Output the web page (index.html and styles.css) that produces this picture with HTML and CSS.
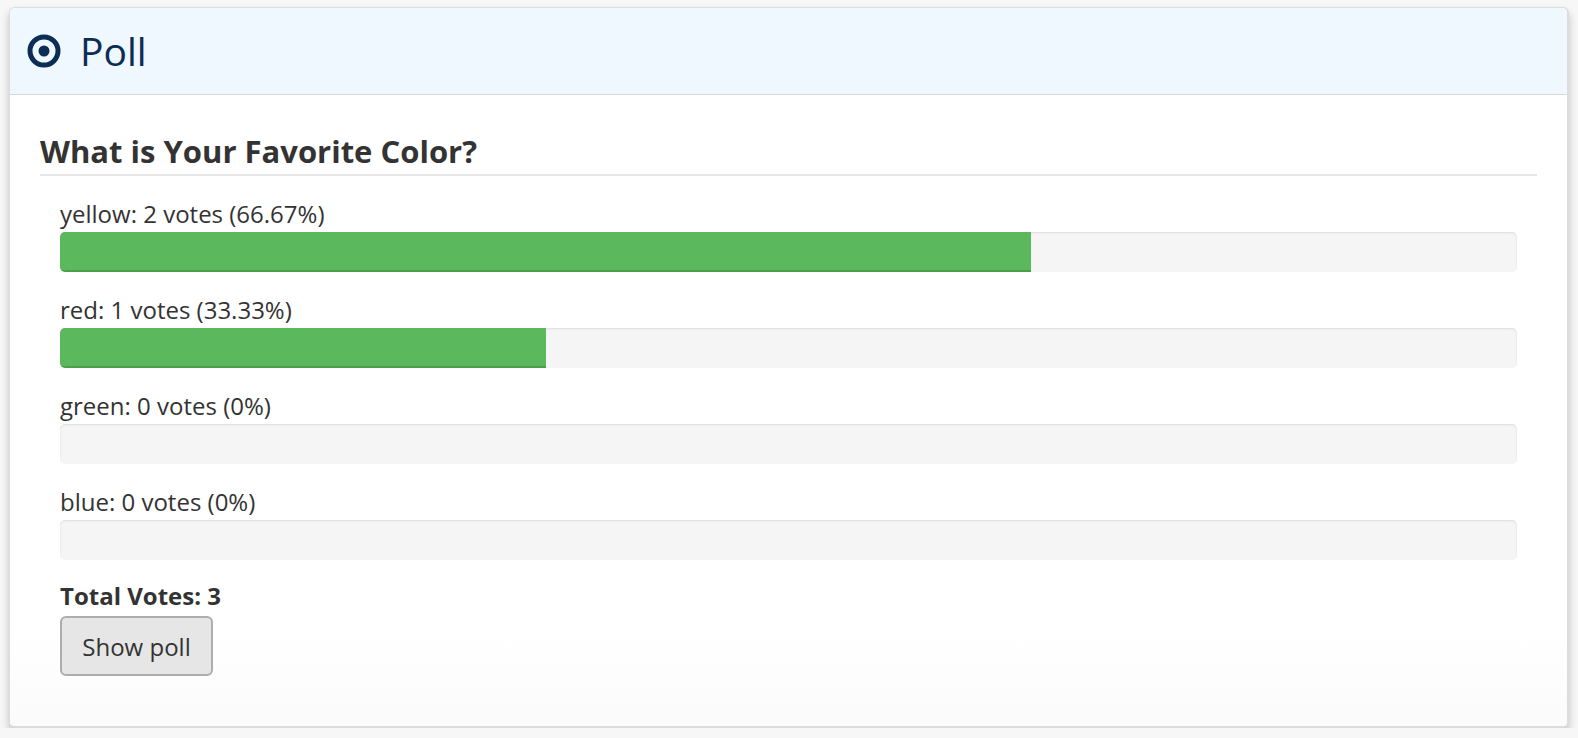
FILE: index.html
```html
<!DOCTYPE html>
<html>
<head>
<meta charset="utf-8">
<link rel="stylesheet" href="styles.css">
</head>
<body>
<div class="panel">
  <div class="panel-heading">
    <svg class="poll-icon" width="34" height="34" viewBox="0 0 34 34">
      <circle cx="17" cy="17" r="14" fill="none" stroke="#0c2d54" stroke-width="5"/>
      <circle cx="17" cy="17" r="5.5" fill="#0c2d54"/>
    </svg>
    <span class="panel-title">Poll</span>
  </div>
  <div class="panel-body">
    <h2 class="question">What is Your Favorite Color?</h2>
    <div class="results">
      <div class="result">
        <div class="result-label">yellow: 2 votes (66.67%)</div>
        <div class="progress"><div class="progress-bar" style="width: 66.67%"></div></div>
      </div>
      <div class="result">
        <div class="result-label">red: 1 votes (33.33%)</div>
        <div class="progress"><div class="progress-bar" style="width: 33.33%"></div></div>
      </div>
      <div class="result">
        <div class="result-label">green: 0 votes (0%)</div>
        <div class="progress"><div class="progress-bar" style="width: 0%"></div></div>
      </div>
      <div class="result">
        <div class="result-label">blue: 0 votes (0%)</div>
        <div class="progress"><div class="progress-bar" style="width: 0%"></div></div>
      </div>
      <div class="total">Total Votes: 3</div>
      <button class="btn">Show poll</button>
    </div>
  </div>
</div>
</body>
</html>
```
FILE: styles.css
```css
html, body {
  margin: 0;
  padding: 0;
}
body {
  background: #f7f7f7;
  font-family: "Open Sans", "Liberation Sans", sans-serif;
  color: #333;
  padding: 7px 9px 0 9px;
}
.panel {
  width: 1560px;
  background: #fff;
  border: 1px solid #dcdcdc;
  border-right-width: 2px;
  border-bottom-width: 2px;
  border-radius: 6px;
  box-shadow: 0 5px 8px rgba(0,0,0,0.22);
  box-sizing: border-box;
  overflow: hidden;
}
.panel-heading {
  height: 87px;
  background: #eff7ff;
  border-bottom: 1px solid #d8d8d8;
  display: flex;
  align-items: center;
  padding-left: 17px;
  box-sizing: border-box;
}
.poll-icon {
  display: block;
  margin-right: 19px;
}
.panel-title {
  font-size: 39px;
  color: #0c2d54;
  line-height: 1;
  margin-top: -2px;
}
.panel-body {
  padding: 40px 30px 50px 30px;
  background: linear-gradient(to bottom, #fff 85%, #fbfbfb 100%);
}
.question {
  margin: 0;
  font-size: 31px;
  font-weight: 700;
  line-height: 32px;
  padding-bottom: 7px;
  border-bottom: 2px solid #e5e5e5;
  color: #333;
}
.results {
  padding: 24px 20px 0 20px;
}
.result {
  margin-bottom: 24px;
}
.result-label {
  font-size: 24px;
  line-height: 28px;
  margin-bottom: 4px;
}
.progress {
  height: 40px;
  background: #f5f5f5;
  border-radius: 5px;
  box-shadow: inset 0 1px 2px rgba(0,0,0,0.1);
  overflow: hidden;
}
.progress-bar {
  height: 100%;
  background: #5cb85c;
  box-shadow: inset 0 -2px 0 rgba(0,0,0,0.15);
}
.total {
  font-size: 24px;
  font-weight: 700;
  line-height: 28px;
  margin-top: -2px;
}
.btn {
  display: block;
  margin-top: 6px;
  font-family: "Open Sans", "Liberation Sans", sans-serif;
  font-size: 24px;
  color: #333;
  background: #e6e6e6;
  border: 2px solid #adadad;
  border-radius: 6px;
  width: 153px;
  height: 60px;
  padding: 0;
}
```
